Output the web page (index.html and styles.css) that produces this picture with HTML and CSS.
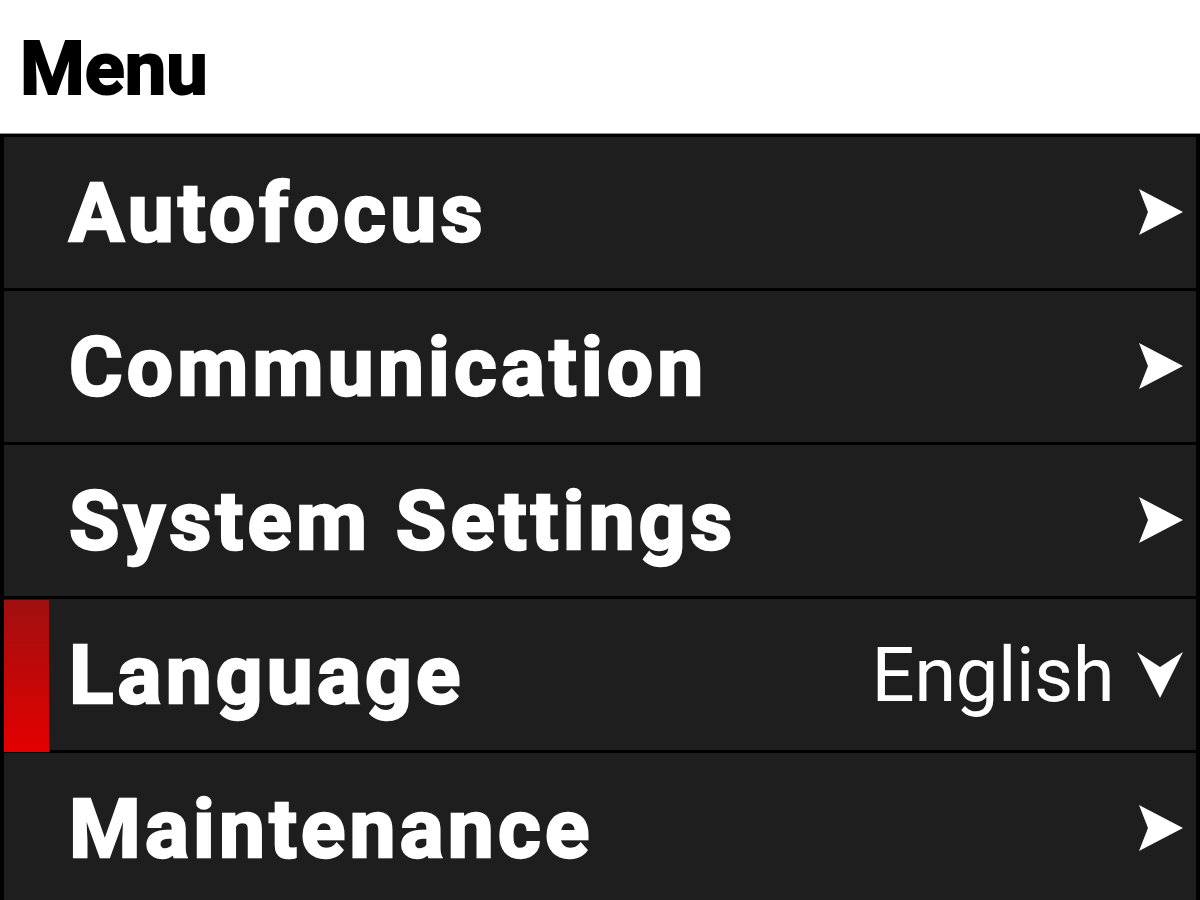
FILE: index.html
```html
<!DOCTYPE html>
<html>
<head>
<meta charset="utf-8">
<link rel="stylesheet" href="styles.css">
</head>
<body>
<div class="screen">
  <header class="title">Menu</header>
  <div class="list">
    <div class="row">
      <span class="label">Autofocus</span>
      <svg class="arrow" viewBox="0 0 44 46"><polygon points="0,0 44,23 0,46 9,23"/></svg>
    </div>
    <div class="row">
      <span class="label">Communication</span>
      <svg class="arrow" viewBox="0 0 44 46"><polygon points="0,0 44,23 0,46 9,23"/></svg>
    </div>
    <div class="row">
      <span class="label">System Settings</span>
      <svg class="arrow" viewBox="0 0 44 46"><polygon points="0,0 44,23 0,46 9,23"/></svg>
    </div>
    <div class="row selected">
      <span class="marker"></span>
      <span class="label">Language</span>
      <span class="value">English</span>
      <svg class="down" viewBox="0 0 46 46"><polygon points="0,0 23,15 46,0 23,46"/></svg>
    </div>
    <div class="row">
      <span class="label">Maintenance</span>
      <svg class="arrow" viewBox="0 0 44 46"><polygon points="0,0 44,23 0,46 9,23"/></svg>
    </div>
  </div>
</div>
</body>
</html>
```
FILE: styles.css
```css
html, body {
  margin: 0;
  padding: 0;
  background: #ffffff;
}
.screen {
  width: 1200px;
  height: 900px;
  overflow: hidden;
  display: flex;
  flex-direction: column;
  font-family: Roboto, "Liberation Sans", sans-serif;
}
.title {
  height: 133px;
  flex: none;
  box-sizing: border-box;
  padding-left: 20px;
  padding-top: 14px;
  font-size: 74px;
  font-weight: 700;
  -webkit-text-stroke: 2px #000;
  color: #000;
  line-height: 110px;
}
.list {
  flex: none;
  background: #000;
  padding: 3px 4px 0 4px;
  display: flex;
  flex-direction: column;
  gap: 3px;
  border-top: 1px solid #8a8a8a;
}
.row {
  position: relative;
  flex: none;
  height: 151px;
  background: #1e1e1e;
  display: flex;
  align-items: center;
  padding-left: 65px;
  padding-right: 13px;
  color: #fff;
}
.label {
  flex: 1;
  font-size: 82px;
  font-weight: 700;
  -webkit-text-stroke: 2.5px #fff;
  letter-spacing: 4.2px;
  line-height: 1;
}
.value {
  font-size: 76px;
  font-weight: 400;
  letter-spacing: -0.5px;
  line-height: 1;
  margin-right: 23px;
}
.arrow {
  width: 44px;
  height: 46px;
  fill: #fff;
  position: relative;
  top: -1px;
}
.down {
  width: 46px;
  height: 46px;
  fill: #fff;
}
.marker {
  position: absolute;
  left: 0;
  top: 1px;
  bottom: -2px;
  width: 45px;
  background: linear-gradient(#a00f0f, #e30000);
}
```
